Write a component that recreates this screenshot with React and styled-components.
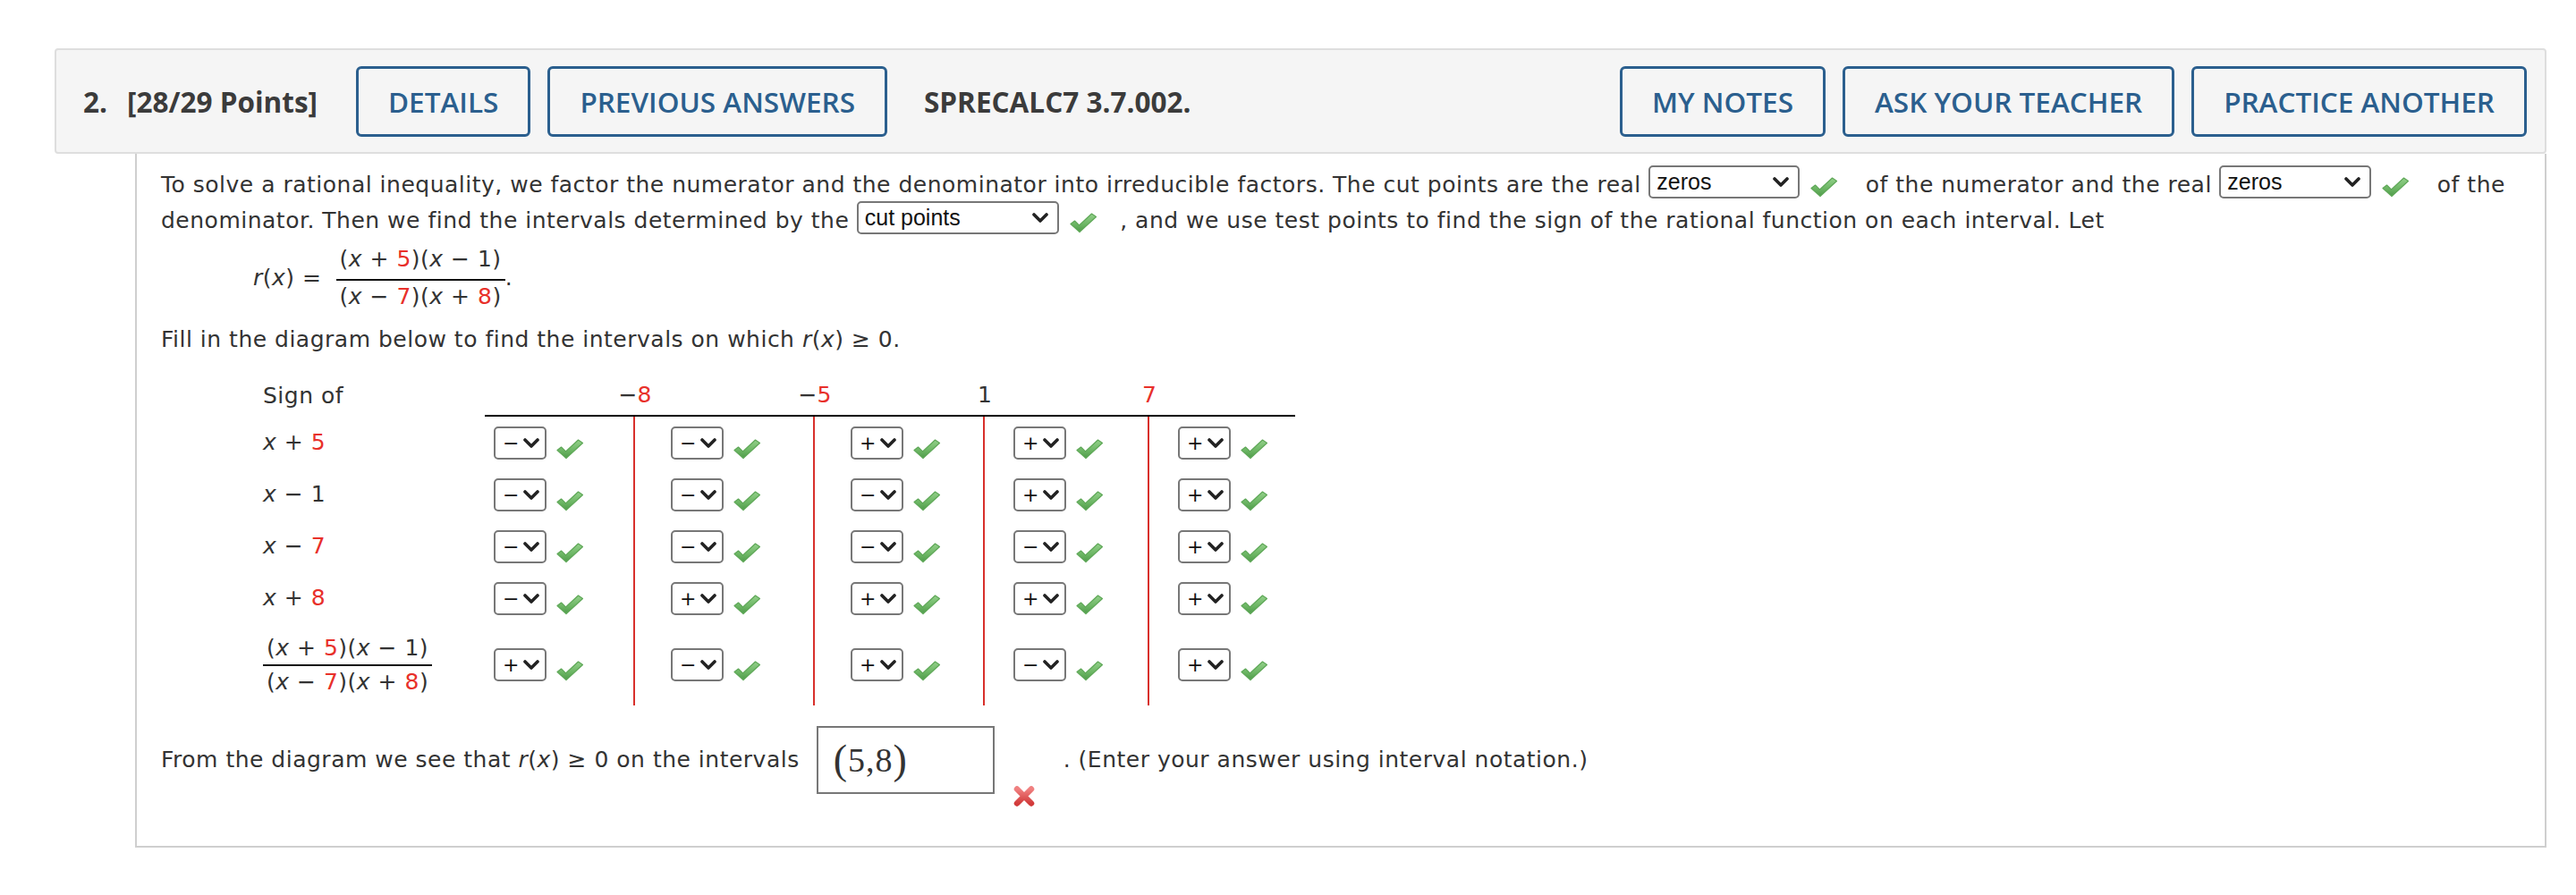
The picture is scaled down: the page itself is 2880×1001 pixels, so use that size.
import React from "react";
import styled, { createGlobalStyle } from "styled-components";

const GlobalStyle = createGlobalStyle`
  html, body { margin: 0; padding: 0; background: #ffffff; }
  body { font-family: "DejaVu Sans", Verdana, sans-serif; color: #333333; }
`;

const Page = styled.div`
  padding: 54px 33px 0 61px;
`;

const Header = styled.div`
  display: flex;
  align-items: center;
  height: 118px;
  box-sizing: border-box;
  background: #f5f5f5;
  border: 2px solid #dedede;
  border-radius: 4px;
  padding: 0 20px 0 30px;
  font-family: "Open Sans", "Liberation Sans", sans-serif;
`;

const HeadText = styled.span`
  font-weight: 700;
  font-size: 31.5px;
  color: #3b3b3b;
  white-space: nowrap;
  margin-right: ${(p) => p.$mr || 0}px;
  margin-left: ${(p) => p.$ml || 0}px;
`;

const ButtonGroup = styled.div`
  display: flex;
  gap: 19px;
  margin-left: ${(p) => (p.$right ? "auto" : "0")};
`;

const HeaderButton = styled.button`
  height: 79px;
  box-sizing: border-box;
  border: 3px solid #2b5f8e;
  border-radius: 6px;
  background: transparent;
  color: #2b5f8e;
  font-family: "Open Sans", "Liberation Sans", sans-serif;
  font-weight: 600;
  font-size: 31.5px;
  padding: 0 33px;
  white-space: nowrap;
`;

const Body = styled.div`
  margin-left: 90px;
  border: 2px solid #cfcfcf;
  border-top: none;
  padding: 13px 39px 58px 27px;
  font-size: 25px;
  letter-spacing: 0.5px;
  line-height: 40px;
  color: #333333;
`;

const Line = styled.div`
  white-space: nowrap;
  height: 40px;
`;

const Select = styled.span`
  display: inline-flex;
  align-items: center;
  justify-content: space-between;
  box-sizing: border-box;
  width: ${(p) => p.$w}px;
  height: 37px;
  border: 2px solid #777777;
  border-radius: 5px;
  padding: 0 ${(p) => (p.$sign ? 6 : 10)}px 0 ${(p) => (p.$sign ? 8 : 7)}px;
  font-family: ${(p) => (p.$sign ? '"DejaVu Sans", sans-serif' : '"Liberation Sans", Arial, sans-serif')};
  font-size: ${(p) => (p.$sign ? 22 : 25)}px;
  letter-spacing: 0;
  line-height: 27px;
  color: #111111;
  vertical-align: 3px;
  background: #ffffff;
`;

const Chevron = () => (
  <svg width="18" height="11" viewBox="0 0 18 11" style={{ display: "block" }}>
    <path d="M2 2 L9 9 L16 2" fill="none" stroke="#222" strokeWidth="3.6" strokeLinecap="round" strokeLinejoin="round" />
  </svg>
);

const CheckSvg = styled.svg`
  display: inline-block;
  vertical-align: ${(p) => (p.$inline ? "-6px" : "0")};
  margin-left: ${(p) => (p.$inline ? 11 : 0)}px;
  margin-right: ${(p) => p.$mr || 0}px;
  flex-shrink: 0;
`;

const Check = ({ inline, mr }) => (
  <CheckSvg $inline={inline} $mr={mr} width="32" height="24" viewBox="0 0 32 24">
    <defs>
      <linearGradient id="chk" x1="0" y1="0" x2="0" y2="1">
        <stop offset="0" stopColor="#93d08a" />
        <stop offset="0.6" stopColor="#6bb563" />
        <stop offset="1" stopColor="#4f9a4a" />
      </linearGradient>
    </defs>
    <path
      d="M2 13.5 L6.5 10 L11.5 15 L25.5 2 L30.5 5.5 L12 22.5 Z"
      fill="url(#chk)"
      stroke="#5fa858"
      strokeWidth="1.2"
      strokeLinejoin="round"
    />
  </CheckSvg>
);

const Red = styled.span`
  color: #e8302a;
`;

const I = styled.i`
  font-style: italic;
`;

const Formula = styled.div`
  display: flex;
  align-items: center;
  margin: 7px 0 0 103px;
  white-space: nowrap;
`;

const FracWrap = styled.span`
  display: inline-flex;
  flex-direction: column;
  align-items: stretch;
  margin-left: ${(p) => p.$ml || 0}px;
`;

const FracPart = styled.span`
  display: block;
  height: 36px;
  line-height: 36px;
  padding: 0 4px;
  text-align: center;
`;

const FracBar = styled.span`
  display: block;
  height: 2px;
  background: #111111;
  margin-top: ${(p) => p.$gap || 0}px;
`;

const Fraction = ({ ml, gap }) => (
  <FracWrap $ml={ml}>
    <FracPart>
      (<I>x</I> + <Red>5</Red>)(<I>x</I> − 1)
    </FracPart>
    <FracBar $gap={gap} />
    <FracPart>
      (<I>x</I> − <Red>7</Red>)(<I>x</I> + <Red>8</Red>)
    </FracPart>
  </FracWrap>
);

const FillLine = styled.div`
  margin-top: 10px;
  height: 40px;
  white-space: nowrap;
`;

const Table = styled.div`
  margin: 20px 0 0 114px;
`;

const COLS = "248px 168px 201px 190px 184px 163px";

const HeadRow = styled.div`
  display: grid;
  grid-template-columns: ${COLS};
  height: 46px;
`;

const HeadCell = styled.div`
  display: flex;
  align-items: center;
  justify-content: ${(p) => (p.$label ? "flex-start" : "flex-end")};
  border-bottom: ${(p) => (p.$label ? "none" : "2px solid #000")};
  box-sizing: border-box;
`;

const CutLabel = styled.span`
  display: inline-block;
  letter-spacing: 0;
  transform: translateX(50%);
`;

const Row = styled.div`
  display: grid;
  grid-template-columns: ${COLS};
  height: ${(p) => p.$h}px;
`;

const LabelCell = styled.div`
  display: flex;
  align-items: center;
  white-space: nowrap;
`;

const LabelText = styled.span`
  display: inline-block;
`;

const SignCell = styled.div`
  display: flex;
  align-items: center;
  box-sizing: border-box;
  padding-left: ${(p) => p.$pad}px;
  border-right: ${(p) => (p.$divider ? "2px solid #d8302b" : "none")};
`;

const SignGroup = styled.span`
  display: inline-flex;
  align-items: flex-end;
  gap: 10px;
`;

const AnswerRow = styled.div`
  display: flex;
  align-items: center;
  margin-top: 23px;
  white-space: nowrap;
`;

const AnswerText = styled.span`
  display: inline-block;
`;

const AnswerBox = styled.div`
  width: 199px;
  height: 76px;
  box-sizing: border-box;
  border: 2px solid #777777;
  margin-left: 19px;
  display: flex;
  align-items: center;
  padding-left: 17px;
  font-family: "Liberation Serif", "Times New Roman", serif;
  font-size: 38px;
  letter-spacing: 1px;
  color: #333333;
`;

const Paren = styled.span`
  font-size: 46px;
  line-height: 46px;
`;

const XWrap = styled.span`
  align-self: flex-end;
  margin: 0 31px -15px 20px;
  display: flex;
`;

const XIcon = () => (
  <svg width="26" height="25" viewBox="0 0 26 25">
    <defs>
      <linearGradient id="xg" x1="0" y1="0" x2="0" y2="1">
        <stop offset="0" stopColor="#f08080" />
        <stop offset="1" stopColor="#d23b3b" />
      </linearGradient>
    </defs>
    <path d="M5 4.5 L21 20.5 M21 4.5 L5 20.5" fill="none" stroke="url(#xg)" strokeWidth="6.5" strokeLinecap="round" />
  </svg>
);

const PADS = [10, 40, 40, 32, 32];

const ROWS = [
  { label: <LabelText><I>x</I> + <Red>5</Red></LabelText>, signs: ["−", "−", "+", "+", "+"], h: 58 },
  { label: <LabelText><I>x</I> − 1</LabelText>, signs: ["−", "−", "−", "+", "+"], h: 58 },
  { label: <LabelText><I>x</I> − <Red>7</Red></LabelText>, signs: ["−", "−", "−", "−", "+"], h: 58 },
  { label: <LabelText><I>x</I> + <Red>8</Red></LabelText>, signs: ["−", "+", "+", "+", "+"], h: 58 },
  { label: <Fraction />, signs: ["+", "−", "+", "−", "+"], h: 91 },
];

export default function App() {
  return (
    <>
      <GlobalStyle />
      <Page>
        <Header>
          <HeadText $mr={22}>2.</HeadText>
          <HeadText $mr={43}>[28/29 Points]</HeadText>
          <ButtonGroup>
            <HeaderButton>DETAILS</HeaderButton>
            <HeaderButton>PREVIOUS ANSWERS</HeaderButton>
          </ButtonGroup>
          <HeadText $ml={41}>SPRECALC7 3.7.002.</HeadText>
          <ButtonGroup $right>
            <HeaderButton>MY NOTES</HeaderButton>
            <HeaderButton>ASK YOUR TEACHER</HeaderButton>
            <HeaderButton>PRACTICE ANOTHER</HeaderButton>
          </ButtonGroup>
        </Header>
        <Body>
          <Line>
            To solve a rational inequality, we factor the numerator and the denominator into irreducible factors. The cut points are the real{" "}
            <Select $w={169}>
              zeros
              <Chevron />
            </Select>
            <Check inline mr={22} /> of the numerator and the real{" "}
            <Select $w={170}>
              zeros
              <Chevron />
            </Select>
            <Check inline mr={22} /> of the
          </Line>
          <Line>
            denominator. Then we find the intervals determined by the{" "}
            <Select $w={226}>
              cut points
              <Chevron />
            </Select>
            <Check inline mr={17} /> , and we use test points to find the sign of the rational function on each interval. Let
          </Line>
          <Formula>
            <I>r</I>(<I>x</I>) =
            <Fraction ml={16} gap={4} />.
          </Formula>
          <FillLine>
            Fill in the diagram below to find the intervals on which <I>r</I>(<I>x</I>) ≥ 0.
          </FillLine>
          <Table>
            <HeadRow>
              <HeadCell $label>Sign of</HeadCell>
              <HeadCell>
                <CutLabel>
                  −<Red>8</Red>
                </CutLabel>
              </HeadCell>
              <HeadCell>
                <CutLabel>
                  −<Red>5</Red>
                </CutLabel>
              </HeadCell>
              <HeadCell>
                <CutLabel>1</CutLabel>
              </HeadCell>
              <HeadCell>
                <CutLabel>
                  <Red>7</Red>
                </CutLabel>
              </HeadCell>
              <HeadCell />
            </HeadRow>
            {ROWS.map((r, ri) => (
              <Row key={ri} $h={r.h}>
                <LabelCell>{r.label}</LabelCell>
                {r.signs.map((s, ci) => (
                  <SignCell key={ci} $pad={PADS[ci]} $divider={ci < 4}>
                    <SignGroup>
                      <Select $w={59} $sign>
                        {s}
                        <Chevron />
                      </Select>
                      <Check />
                    </SignGroup>
                  </SignCell>
                ))}
              </Row>
            ))}
          </Table>
          <AnswerRow>
            <AnswerText>
              From the diagram we see that <I>r</I>(<I>x</I>) ≥ 0 on the intervals
            </AnswerText>
            <AnswerBox>
              <Paren>(</Paren>5,8<Paren>)</Paren>
            </AnswerBox>
            <XWrap>
              <XIcon />
            </XWrap>
            <AnswerText>. (Enter your answer using interval notation.)</AnswerText>
          </AnswerRow>
        </Body>
      </Page>
    </>
  );
}
